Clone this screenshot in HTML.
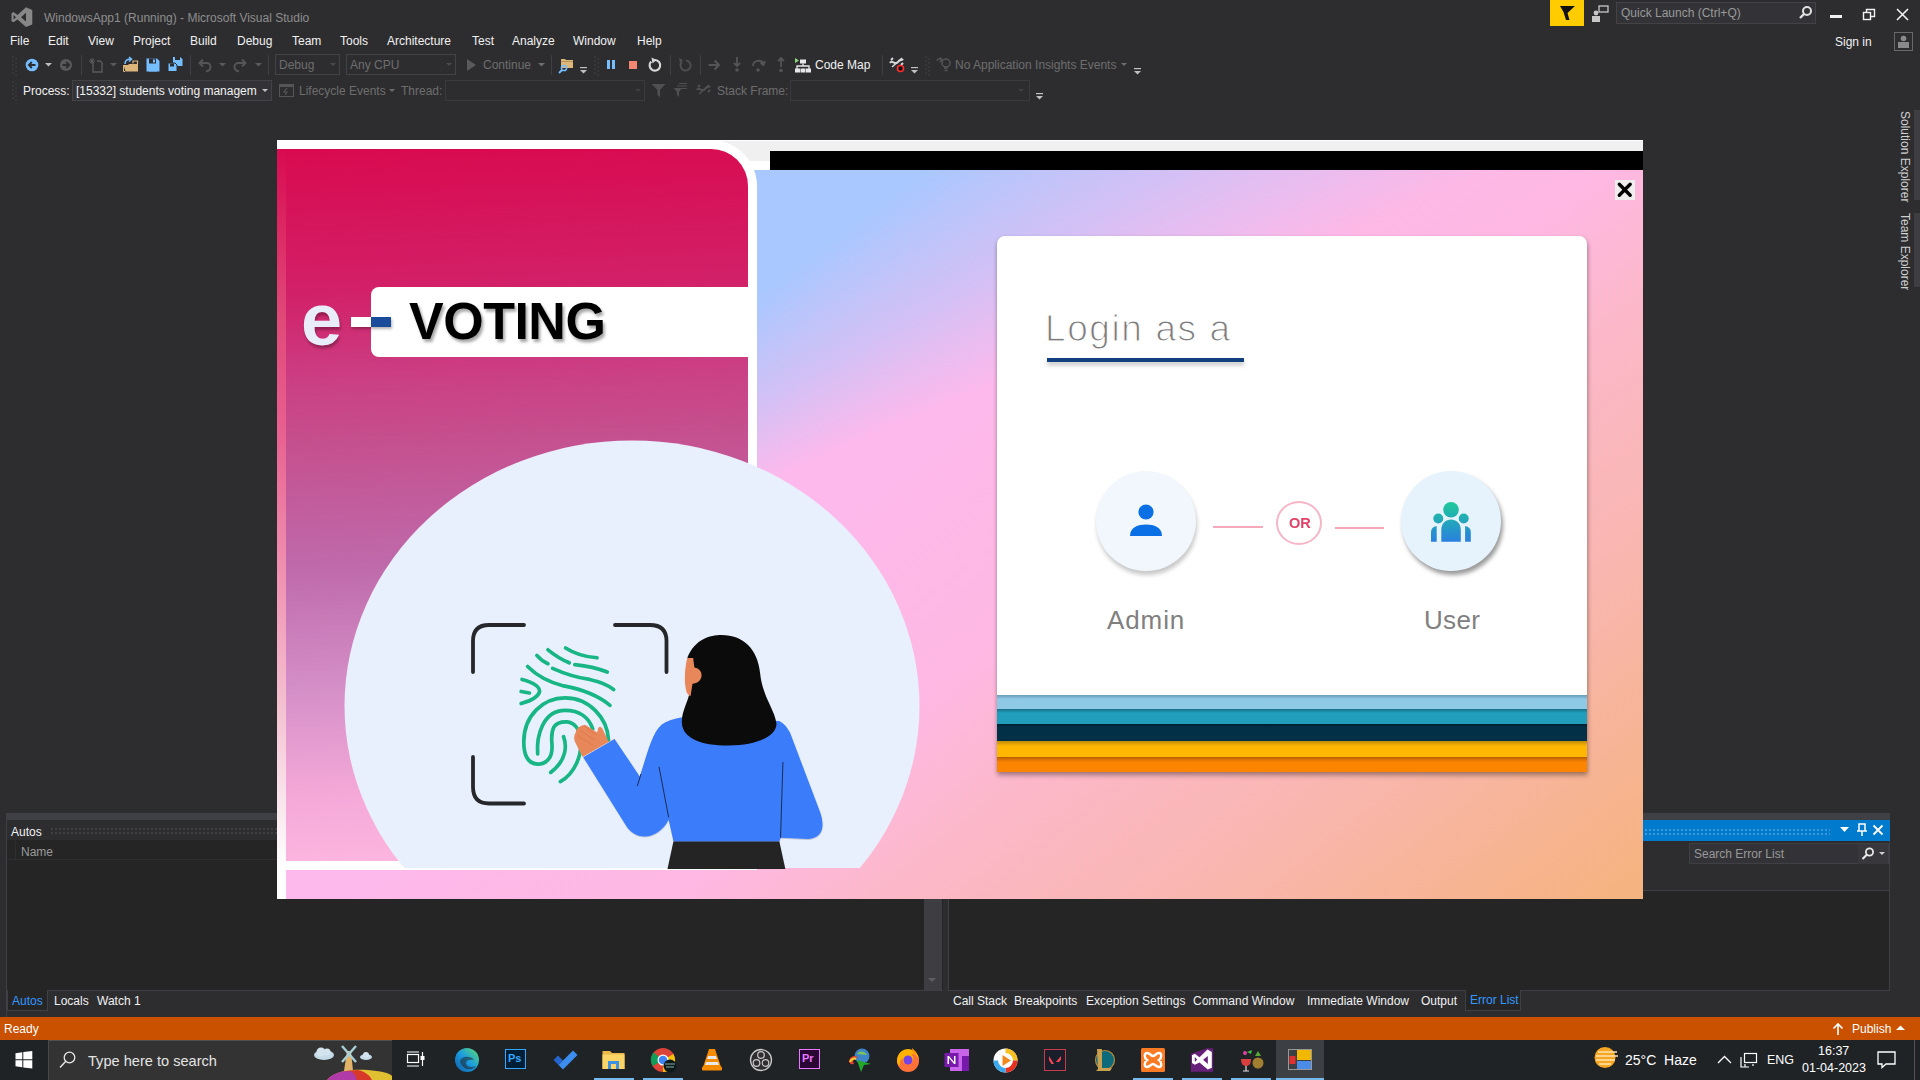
<!DOCTYPE html>
<html><head><meta charset="utf-8">
<style>
*{margin:0;padding:0;box-sizing:border-box}
html,body{width:1920px;height:1080px;overflow:hidden;background:#2d2d30;font-family:"Liberation Sans",sans-serif;}
.a{position:absolute}
.t{position:absolute;white-space:nowrap;line-height:1;font-size:12px;color:#f1f1f1}
.g{color:#6d6d6d}
svg{position:absolute;overflow:visible}
</style></head><body>
<!-- ===== VS TITLE BAR ===== -->
<svg class="a" style="left:0;top:0" width="40" height="32"><path d="M26,7.3 L32.3,10 L32.3,24.5 L26,27 L17.5,19.5 L13.5,22.3 L11.5,21.2 L11.5,13.2 L13.5,12 L17.5,15 Z M26,12.8 L21,17.2 L26,21.6 Z M13.6,15 L13.6,19.4 L16,17.2 Z" fill="#878787" fill-rule="evenodd"/></svg>
<div class="t" style="left:44px;top:12px;color:#8e8e8e">WindowsApp1 (Running) - Microsoft Visual Studio</div>

<!-- right title controls -->
<div class="a" style="left:1550px;top:0;width:34px;height:26px;background:#ffcc00"></div>
<svg style="left:1550px;top:0" width="34" height="26"><path d="M10,6 L25,6 L17.5,13 L19.5,20 L16,20 L13.5,12 Z" fill="#111"/></svg>
<svg style="left:1590px;top:4px" width="20" height="18"><rect x="9" y="2" width="9" height="6" fill="none" stroke="#c8c8c8" stroke-width="1.3"/><circle cx="6" cy="9" r="2.4" fill="#c8c8c8"/><rect x="2" y="12" width="8" height="6" fill="#c8c8c8"/></svg>
<div class="a" style="left:1616px;top:2px;width:200px;height:22px;background:#333337;border:1px solid #434346"></div>
<div class="t" style="left:1621px;top:7px;color:#999;font-size:12px">Quick Launch (Ctrl+Q)</div>
<svg style="left:1798px;top:5px" width="16" height="16"><circle cx="9" cy="6" r="4" fill="none" stroke="#e0e0e0" stroke-width="2"/><path d="M6.5,8.5 L2,13" stroke="#e0e0e0" stroke-width="2.4"/></svg>
<div class="a" style="left:1830px;top:15px;width:12px;height:3px;background:#f1f1f1"></div>
<svg style="left:1862px;top:7px" width="16" height="16"><rect x="1.5" y="5.5" width="7" height="7" fill="none" stroke="#f1f1f1" stroke-width="1.4"/><path d="M4.5,5.5 V2.5 H12.5 V9.5 H8.5" fill="none" stroke="#f1f1f1" stroke-width="1.4"/></svg>
<svg style="left:1895px;top:7px" width="16" height="16"><path d="M2,2 L13,13 M13,2 L2,13" stroke="#f1f1f1" stroke-width="1.6"/></svg>
<div class="t" style="left:1835px;top:36px;font-size:12px;color:#f1f1f1">Sign in</div>
<div class="a" style="left:1894px;top:32px;width:19px;height:19px;border:1px solid #686868"></div>
<svg style="left:1894px;top:32px" width="19" height="19"><circle cx="9.5" cy="6.5" r="2.8" fill="#8a8a8a"/><rect x="4" y="10" width="11" height="6" fill="#8a8a8a"/></svg>

<!-- ===== MENU ===== -->
<div class="t" style="left:10px;top:35px">File</div>
<div class="t" style="left:48px;top:35px">Edit</div>
<div class="t" style="left:88px;top:35px">View</div>
<div class="t" style="left:133px;top:35px">Project</div>
<div class="t" style="left:190px;top:35px">Build</div>
<div class="t" style="left:237px;top:35px">Debug</div>
<div class="t" style="left:292px;top:35px">Team</div>
<div class="t" style="left:340px;top:35px">Tools</div>
<div class="t" style="left:387px;top:35px">Architecture</div>
<div class="t" style="left:472px;top:35px">Test</div>
<div class="t" style="left:512px;top:35px">Analyze</div>
<div class="t" style="left:573px;top:35px">Window</div>
<div class="t" style="left:637px;top:35px">Help</div>

<!-- ===== TOOLBAR ROW 1 ===== -->
<svg style="left:12px;top:56px" width="6" height="20"><g fill="#464646"><circle cx="1" cy="1" r=".8"/><circle cx="4" cy="3" r=".8"/><circle cx="1" cy="5" r=".8"/><circle cx="4" cy="7" r=".8"/><circle cx="1" cy="9" r=".8"/><circle cx="4" cy="11" r=".8"/><circle cx="1" cy="13" r=".8"/><circle cx="4" cy="15" r=".8"/><circle cx="1" cy="17" r=".8"/><circle cx="4" cy="19" r=".8"/></g></svg>
<svg style="left:24px;top:57px" width="16" height="16"><circle cx="8" cy="8" r="6.3" fill="#75beff"/><path d="M11.5,8 H5 M7.8,5 L4.8,8 L7.8,11" stroke="#2d2d30" stroke-width="1.8" fill="none"/></svg>
<svg style="left:45px;top:63px" width="8" height="5"><path d="M0,0 H7 L3.5,3.5Z" fill="#bcbcbc"/></svg>
<svg style="left:58px;top:57px" width="16" height="16"><circle cx="8" cy="8" r="6.1" fill="#595959"/><path d="M4.5,8 H11 M8.2,5 L11.2,8 L8.2,11" stroke="#2d2d30" stroke-width="1.8" fill="none"/></svg>
<div class="a" style="left:81px;top:55px;width:1px;height:20px;background:#3f3f46"></div>
<svg style="left:89px;top:58px" width="15" height="15"><path d="M4,4 V14 H13 V5 L11,3 H8" fill="none" stroke="#5a5a5a" stroke-width="1.4"/><path d="M1,1 L5,5 M5,1 L1,5 M3,0 V6 M0,3 H6" stroke="#5a5a5a" stroke-width="1"/></svg>
<svg style="left:110px;top:63px" width="8" height="5"><path d="M0,0 H7 L3.5,3.5Z" fill="#5a5a5a"/></svg>
<svg style="left:123px;top:57px" width="16" height="16"><path d="M0.5,8 H5 L6,7 H15 V14.5 H2.5 Z" fill="#dcb67a"/><path d="M0.5,8 V14.5 H2" stroke="#dcb67a" fill="none"/><path d="M10,6.5 V4 H14.5 V7" stroke="#dcb67a" fill="none" stroke-width="1.2"/><path d="M2,7 C2,3 5,2 8,2 M6,0 L8.5,2 L6,4.5" stroke="#75beff" stroke-width="1.6" fill="none"/></svg>
<svg style="left:146px;top:58px" width="14" height="14"><path d="M0.5,0.5 H11 L13.5,3 V13.5 H0.5 Z" fill="#75beff"/><rect x="3" y="0.5" width="7" height="5" fill="#2d2d30"/><rect x="7" y="1.5" width="2" height="3" fill="#75beff"/><rect x="3" y="9" width="8" height="4.5" fill="#75beff"/></svg>
<svg style="left:167px;top:56px" width="16" height="16"><path d="M6,1 H13 L15.5,3 V10 H6 Z" fill="#75beff"/><rect x="8" y="1" width="5" height="3" fill="#2d2d30"/><path d="M1,7 H8 L10,9 V15.5 H1 Z" fill="#75beff" stroke="#2d2d30" stroke-width="1"/><rect x="3" y="7.5" width="4" height="3" fill="#2d2d30"/></svg>
<div class="a" style="left:190px;top:55px;width:1px;height:20px;background:#3f3f46"></div>
<svg style="left:198px;top:58px" width="14" height="14"><path d="M2,5 H9 C12,5 12.5,8 12.5,9 C12.5,12 10,13 8,13.5 M5,1.5 L1.5,5 L5,8.5" stroke="#555" stroke-width="2" fill="none"/></svg>
<svg style="left:219px;top:63px" width="8" height="5"><path d="M0,0 H7 L3.5,3.5Z" fill="#5a5a5a"/></svg>
<svg style="left:233px;top:58px" width="14" height="14"><path d="M12,5 H5 C2,5 1.5,8 1.5,9 C1.5,12 4,13 6,13.5 M9,1.5 L12.5,5 L9,8.5" stroke="#555" stroke-width="2" fill="none"/></svg>
<svg style="left:255px;top:63px" width="8" height="5"><path d="M0,0 H7 L3.5,3.5Z" fill="#5a5a5a"/></svg>
<div class="a" style="left:268px;top:55px;width:1px;height:20px;background:#3f3f46"></div>
<div class="a" style="left:275px;top:54px;width:65px;height:21px;border:1px solid #434346"></div>
<div class="t g" style="left:279px;top:59px">Debug</div>
<svg style="left:330px;top:63px" width="8" height="5"><path d="M0,0 H6 L3,3Z" fill="#4a4a4a"/></svg>
<div class="a" style="left:346px;top:54px;width:110px;height:21px;border:1px solid #434346"></div>
<div class="t g" style="left:350px;top:59px">Any CPU</div>
<svg style="left:446px;top:63px" width="8" height="5"><path d="M0,0 H6 L3,3Z" fill="#4a4a4a"/></svg>
<svg style="left:467px;top:59px" width="10" height="13"><path d="M0,0 L9,6 L0,12Z" fill="#5a5a5a"/></svg>
<div class="t g" style="left:483px;top:59px">Continue</div>
<svg style="left:538px;top:63px" width="8" height="5"><path d="M0,0 H7 L3.5,3.5Z" fill="#6d6d6d"/></svg>
<div class="a" style="left:551px;top:55px;width:1px;height:20px;background:#3f3f46"></div>
<svg style="left:558px;top:57px" width="16" height="17"><path d="M3,2 H7 L8,3 H15 V11 H3Z" fill="#dcb67a"/><rect x="3" y="4" width="12" height="1" fill="#b8955a"/><circle cx="6" cy="11" r="2.6" fill="none" stroke="#75beff" stroke-width="1.5"/><path d="M4,13 L1,16" stroke="#75beff" stroke-width="1.8"/></svg>
<svg style="left:580px;top:67px" width="8" height="8"><rect x="0" y="0" width="7" height="1.2" fill="#c0c0c0"/><path d="M0,3 H7 L3.5,6.5Z" fill="#c0c0c0"/></svg>
<svg style="left:594px;top:56px" width="6" height="20"><g fill="#464646"><circle cx="1" cy="1" r=".8"/><circle cx="4" cy="3" r=".8"/><circle cx="1" cy="5" r=".8"/><circle cx="4" cy="7" r=".8"/><circle cx="1" cy="9" r=".8"/><circle cx="4" cy="11" r=".8"/><circle cx="1" cy="13" r=".8"/><circle cx="4" cy="15" r=".8"/><circle cx="1" cy="17" r=".8"/><circle cx="4" cy="19" r=".8"/></g></svg>
<div class="a" style="left:607px;top:60px;width:3px;height:9px;background:#75beff"></div>
<div class="a" style="left:612px;top:60px;width:3px;height:9px;background:#75beff"></div>
<div class="a" style="left:629px;top:61px;width:8px;height:8px;background:#f48771"></div>
<svg style="left:647px;top:57px" width="16" height="16"><path d="M4.2,4.5 A5.3,5.3 0 1 0 8,3 " stroke="#d8d8d8" stroke-width="2.2" fill="none"/><path d="M4.5,0.5 L9.5,3 L5.5,6.5Z" fill="#d8d8d8"/></svg>
<div class="a" style="left:670px;top:55px;width:1px;height:20px;background:#3f3f46"></div>
<svg style="left:677px;top:57px" width="16" height="16"><path d="M5,5 A5,5 0 1 0 9,3.5" stroke="#4e4e4e" stroke-width="2" fill="none"/><path d="M2,1 L6,3 L3,6Z" fill="#4e4e4e"/></svg>
<div class="a" style="left:700px;top:55px;width:1px;height:20px;background:#3f3f46"></div>
<svg style="left:708px;top:59px" width="13" height="12"><path d="M0.5,6 H11 M6.5,1.5 L11,6 L6.5,10.5" stroke="#555" stroke-width="2" fill="none"/></svg>
<svg style="left:732px;top:57px" width="10" height="16"><path d="M5,0 V9 M2,6 L5,9 L8,6" stroke="#555" stroke-width="1.8" fill="none"/><circle cx="5" cy="13" r="1.8" fill="#555"/></svg>
<svg style="left:751px;top:57px" width="15" height="16"><path d="M2,9 C2,3 11,2 12.5,7 M9.5,6 L12.5,8 L14,4" stroke="#555" stroke-width="1.8" fill="none"/><circle cx="7" cy="13" r="1.8" fill="#555"/></svg>
<svg style="left:776px;top:57px" width="10" height="16"><path d="M5,10 V1 M2,4 L5,1 L8,4" stroke="#555" stroke-width="1.8" fill="none"/><circle cx="5" cy="13.5" r="1.8" fill="#555"/></svg>
<svg style="left:794px;top:57px" width="17" height="17"><path d="M1,1 L5,3.5 L1,6Z" fill="#8cd97c"/><rect x="6" y="2.5" width="6" height="4" fill="#e8e8e8"/><path d="M9,6.5 V9 M3,12 V9 H15 V12" stroke="#e8e8e8" stroke-width="1.3" fill="none"/><rect x="1" y="11.5" width="5" height="4" fill="#e8e8e8"/><rect x="6.5" y="11.5" width="5" height="4" fill="#e8e8e8"/><rect x="12" y="11.5" width="5" height="4" fill="#e8e8e8"/></svg>
<div class="t" style="left:815px;top:59px;font-size:12px">Code Map</div>
<div class="a" style="left:882px;top:55px;width:1px;height:20px;background:#3f3f46"></div>
<svg style="left:889px;top:57px" width="17" height="16"><path d="M1,6 C3,2 6,9 9,5 C11,2 13,4 14,2 M4,1 L2,3 M12,8 L14,6" stroke="#d8d8d8" stroke-width="2" fill="none"/><path d="M3,10 L13,1" stroke="#d8d8d8" stroke-width="1.5"/><circle cx="11.5" cy="11.5" r="3" fill="#111" stroke="#ff2d2d" stroke-width="1.6"/></svg>
<svg style="left:911px;top:67px" width="8" height="8"><rect x="0" y="0" width="7" height="1.2" fill="#c0c0c0"/><path d="M0,3 H7 L3.5,6.5Z" fill="#c0c0c0"/></svg>
<svg style="left:925px;top:56px" width="6" height="20"><g fill="#464646"><circle cx="1" cy="1" r=".8"/><circle cx="4" cy="3" r=".8"/><circle cx="1" cy="5" r=".8"/><circle cx="4" cy="7" r=".8"/><circle cx="1" cy="9" r=".8"/><circle cx="4" cy="11" r=".8"/><circle cx="1" cy="13" r=".8"/><circle cx="4" cy="15" r=".8"/><circle cx="1" cy="17" r=".8"/><circle cx="4" cy="19" r=".8"/></g></svg>
<svg style="left:936px;top:57px" width="16" height="16"><circle cx="10" cy="6" r="4" fill="none" stroke="#555" stroke-width="1.5"/><path d="M8,11 H12 M8.5,13.5 H11.5" stroke="#555" stroke-width="1.3"/><path d="M1,4 C1,1.5 4,1 6,3 M4,0.5 L6,3 L3.5,5" stroke="#555" stroke-width="1.3" fill="none"/></svg>
<div class="t g" style="left:955px;top:59px">No Application Insights Events</div>
<svg style="left:1121px;top:63px" width="8" height="5"><path d="M0,0 H6 L3,3Z" fill="#6d6d6d"/></svg>
<svg style="left:1134px;top:68px" width="8" height="8"><rect x="0" y="0" width="7" height="1.2" fill="#c0c0c0"/><path d="M0,3 H7 L3.5,6.5Z" fill="#c0c0c0"/></svg>

<!-- ===== TOOLBAR ROW 2 ===== -->
<svg style="left:12px;top:81px" width="6" height="20"><g fill="#464646"><circle cx="1" cy="1" r=".8"/><circle cx="4" cy="3" r=".8"/><circle cx="1" cy="5" r=".8"/><circle cx="4" cy="7" r=".8"/><circle cx="1" cy="9" r=".8"/><circle cx="4" cy="11" r=".8"/><circle cx="1" cy="13" r=".8"/><circle cx="4" cy="15" r=".8"/><circle cx="1" cy="17" r=".8"/><circle cx="4" cy="19" r=".8"/></g></svg>
<div class="t" style="left:23px;top:85px">Process:</div>
<div class="a" style="left:72px;top:80px;width:200px;height:21px;border:1px solid #434346;background:#333337"></div>
<div class="t" style="left:76px;top:85px">[15332] students voting managem</div>
<svg style="left:262px;top:89px" width="8" height="5"><path d="M0,0 H6 L3,3Z" fill="#c0c0c0"/></svg>
<svg style="left:279px;top:84px" width="16" height="14"><rect x="0.5" y="0.5" width="14" height="12" fill="none" stroke="#555" stroke-width="1"/><rect x="0.5" y="0.5" width="14" height="2.5" fill="#555"/><path d="M8,4 L5,8 H8 L6,11" stroke="#555" stroke-width="1.2" fill="none"/></svg>
<div class="t g" style="left:299px;top:85px">Lifecycle Events</div>
<svg style="left:389px;top:89px" width="8" height="5"><path d="M0,0 H6 L3,3Z" fill="#6d6d6d"/></svg>
<div class="t g" style="left:401px;top:85px">Thread:</div>
<div class="a" style="left:445px;top:80px;width:200px;height:21px;border:1px solid #3a3a3e"></div>
<svg style="left:635px;top:89px" width="8" height="5"><path d="M0,0 H6 L3,3Z" fill="#404040"/></svg>
<svg style="left:651px;top:83px" width="15" height="15"><path d="M0.5,1 H14.5 L9,7 V14.5 L6.5,12 V7Z" fill="#505050"/></svg>
<svg style="left:673px;top:83px" width="15" height="15"><path d="M0.5,5 H9 L6,9 V14 L4,12 V9Z" fill="#505050"/><path d="M4,3 H14 M6,0.5 H14 M8,5.5 H14" stroke="#505050" stroke-width="1.2"/></svg>
<svg style="left:696px;top:84px" width="15" height="12"><path d="M1,6 C3,2 6,9 9,5 C11,2 13,4 14,2 M4,1 L2,3 M12,8 L14,6" stroke="#505050" stroke-width="2" fill="none"/><path d="M3,10 L13,1" stroke="#505050" stroke-width="1.5"/></svg>
<div class="t g" style="left:717px;top:85px">Stack Frame:</div>
<div class="a" style="left:790px;top:80px;width:240px;height:21px;border:1px solid #3a3a3e"></div>
<svg style="left:1018px;top:89px" width="8" height="5"><path d="M0,0 H6 L3,3Z" fill="#404040"/></svg>
<svg style="left:1036px;top:93px" width="8" height="8"><rect x="0" y="0" width="7" height="1.2" fill="#c0c0c0"/><path d="M0,3 H7 L3.5,6.5Z" fill="#c0c0c0"/></svg>

<!-- ===== RIGHT VERTICAL TABS ===== -->
<div class="a" style="left:1914px;top:110px;width:6px;height:90px;background:#3e3e42"></div>
<div class="a" style="left:1914px;top:213px;width:6px;height:74px;background:#3e3e42"></div>
<div class="t" style="left:1897px;top:111px;transform-origin:0 0;transform:translate(14px,0) rotate(90deg);color:#d0d0d0">Solution Explorer</div>
<div class="t" style="left:1897px;top:213px;transform-origin:0 0;transform:translate(14px,0) rotate(90deg);color:#d0d0d0">Team Explorer</div>

<!-- ===== BOTTOM PANELS ===== -->
<!-- left autos panel -->
<div class="a" style="left:6px;top:813px;width:937px;height:204px;background:#252526;border-left:1px solid #3f3f46"></div>
<div class="a" style="left:6px;top:813px;width:937px;height:7px;background:#3f3f46"></div>
<div class="a" style="left:7px;top:820px;width:936px;height:20px;background:#2d2d30"></div>
<div class="a" style="left:50px;top:827px;width:893px;height:7px;background-image:radial-gradient(circle,#4a4a4e 0.6px,transparent 0.9px);background-size:4px 4px"></div>
<div class="t" style="left:11px;top:826px">Autos</div>
<div class="a" style="left:7px;top:840px;width:920px;height:20px;background:#252526;border-bottom:1px solid #2f2f33"></div>
<div class="a" style="left:15px;top:841px;width:1px;height:19px;background:#2f2f33"></div>
<div class="t" style="left:21px;top:846px;color:#999">Name</div>
<div class="a" style="left:924px;top:820px;width:18px;height:170px;background:#3e3e42"></div>
<svg style="left:928px;top:978px" width="10" height="6"><path d="M0,0 H8 L4,4Z" fill="#5e5e62"/></svg>
<div class="a" style="left:7px;top:990px;width:936px;height:27px;background:#2d2d30;border-top:1px solid #3f3f46"></div>
<div class="a" style="left:7px;top:990px;width:41px;height:21px;background:#252526;border:1px solid #3f3f46;border-top:none"></div>
<div class="t" style="left:12px;top:995px;color:#3399ff">Autos</div>
<div class="t" style="left:54px;top:995px">Locals</div>
<div class="t" style="left:97px;top:995px">Watch 1</div>

<!-- right error list panel -->
<div class="a" style="left:948px;top:813px;width:942px;height:204px;background:#2d2d30"></div>
<div class="a" style="left:948px;top:813px;width:942px;height:178px;background:#252526;border-left:1px solid #3f3f46;border-right:1px solid #3f3f46"></div>
<div class="a" style="left:948px;top:813px;width:942px;height:7px;background:#3f3f46"></div>
<div class="a" style="left:948px;top:820px;width:942px;height:21px;background:#007acc"></div>
<div class="a" style="left:1000px;top:828px;width:830px;height:7px;background-image:radial-gradient(circle,#59a8e0 0.6px,transparent 0.9px);background-size:4px 4px"></div>
<svg style="left:1840px;top:827px" width="10" height="7"><path d="M0,0 H9 L4.5,5Z" fill="#fff"/></svg>
<svg style="left:1856px;top:823px" width="12" height="14"><path d="M3,1 H9 V8 H3Z M1,8 H11 M6,8 V13" stroke="#fff" stroke-width="1.5" fill="none"/></svg>
<svg style="left:1872px;top:824px" width="12" height="12"><path d="M1.5,1.5 L10.5,10.5 M10.5,1.5 L1.5,10.5" stroke="#fff" stroke-width="1.8"/></svg>
<div class="a" style="left:949px;top:841px;width:940px;height:50px;background:#2d2d30;border-bottom:1px solid #3f3f46"></div>
<div class="a" style="left:1689px;top:843px;width:200px;height:21px;background:#333337;border:1px solid #3f3f46"></div>
<div class="t" style="left:1694px;top:848px;color:#999">Search Error List</div>
<div class="a" style="left:1858px;top:844px;width:30px;height:20px;background:#38383c"></div>
<svg style="left:1860px;top:846px" width="16" height="16"><circle cx="9.5" cy="6" r="3.6" fill="none" stroke="#e8e8e8" stroke-width="1.8"/><path d="M7,8.5 L2.5,13" stroke="#e8e8e8" stroke-width="2.2"/></svg>
<svg style="left:1879px;top:852px" width="8" height="5"><path d="M0,0 H6 L3,3Z" fill="#d0d0d0"/></svg>
<div class="a" style="left:948px;top:990px;width:942px;height:27px;background:#2d2d30;border-top:1px solid #3f3f46"></div>
<div class="t" style="left:953px;top:995px">Call Stack</div>
<div class="t" style="left:1014px;top:995px">Breakpoints</div>
<div class="t" style="left:1086px;top:995px">Exception Settings</div>
<div class="t" style="left:1193px;top:995px">Command Window</div>
<div class="t" style="left:1307px;top:995px">Immediate Window</div>
<div class="t" style="left:1421px;top:995px">Output</div>
<div class="a" style="left:1465px;top:990px;width:56px;height:21px;background:#252526;border:1px solid #3f3f46;border-top:none"></div>
<div class="t" style="left:1470px;top:994px;color:#3399ff">Error List</div>


<!-- ===== STATUS BAR ===== -->
<div class="a" style="left:0;top:1017px;width:1920px;height:23px;background:#ca5100"></div>
<div class="t" style="left:4px;top:1023px;color:#fff">Ready</div>
<svg style="left:1832px;top:1022px" width="12" height="14"><path d="M6,13 V2 M1.5,6.5 L6,2 L10.5,6.5" stroke="#fff" stroke-width="1.6" fill="none"/></svg>
<div class="t" style="left:1852px;top:1023px;color:#fff">Publish</div>
<svg style="left:1896px;top:1025px" width="10" height="6"><path d="M0,5 H9 L4.5,0.5Z" fill="#fff"/></svg>

<!-- ===== TASKBAR ===== -->
<div class="a" style="left:0;top:1040px;width:1920px;height:40px;background:#1f2326"></div>
<svg style="left:15px;top:1051px" width="18" height="18"><path d="M0.5,2.3 L7.3,1.3 V8.3 H0.5Z M8.3,1.1 L17.3,0 V8.3 H8.3Z M0.5,9.3 H7.3 V16.3 L0.5,15.3Z M8.3,9.3 H17.3 V17.6 L8.3,16.4Z" fill="#fff"/></svg>
<div class="a" style="left:48px;top:1040px;width:344px;height:40px;background:#333333;border-left:1px solid #4a4a4a;border-top:1px solid #505050"></div>
<svg style="left:59px;top:1051px" width="18" height="18"><circle cx="10.5" cy="6.5" r="5.3" fill="none" stroke="#e8e8e8" stroke-width="1.3"/><path d="M6.8,10.2 L1,16.5" stroke="#e8e8e8" stroke-width="1.4"/></svg>
<div class="t" style="left:88px;top:1054px;font-size:14.6px;color:#e4e4e4">Type here to search</div>
<!-- doodle -->
<svg style="left:310px;top:1040px" width="82" height="40">
<ellipse cx="14" cy="15" rx="10" ry="5" fill="#c6dbe8"/><circle cx="11" cy="12" r="4.5" fill="#d4e4ee"/><circle cx="17" cy="12" r="3.5" fill="#d4e4ee"/>
<ellipse cx="56" cy="17" rx="6" ry="3" fill="#c6dbe8"/><circle cx="56" cy="15" r="3" fill="#d4e4ee"/>
<path d="M34,31 L37,11 H41 L43,31Z" fill="#e3b36a"/>
<path d="M32,6 L46,22 M46,6 L32,22" stroke="#a8d0d8" stroke-width="2.4"/>
<path d="M17,40 C25,30 45,29 58,30 C70,31 80,33 82,36 V40Z" fill="#e0c030"/>
<path d="M17,40 C24,33 36,30 48,30 C56,32 60,36 62,40Z" fill="#d8382a"/>
<path d="M17,40 C22,34 30,31 40,31 C45,33 46,37 47,40Z" fill="#b03aa8"/>
</svg>
<svg style="left:406px;top:1051px" width="20" height="17"><rect x="1.5" y="3.5" width="11" height="8" fill="none" stroke="#fff" stroke-width="1.2"/><path d="M1,1 H13 M1,15 H13 M16.5,1 V15" stroke="#fff" stroke-width="1.2"/><rect x="14.5" y="5" width="4" height="4" fill="#fff"/></svg>
<!-- edge -->
<svg style="left:454px;top:1047px" width="26" height="26"><defs><linearGradient id="eg" x1="0" y1="1" x2="1" y2="0"><stop offset="0" stop-color="#0c59a4"/><stop offset=".5" stop-color="#1b9de2"/><stop offset="1" stop-color="#60dd6a"/></linearGradient></defs><circle cx="13" cy="13" r="12" fill="url(#eg)"/><path d="M6,15 C6,9 17,8 20,13 C17,12 11,13 12,17 C13,20 18,21 22,19 C19,24 9,24 6,15Z" fill="#1f2326" opacity=".55"/></svg>
<!-- ps -->
<div class="a" style="left:505px;top:1049px;width:21px;height:20px;background:#001e36;border:1.5px solid #31a8ff"></div>
<div class="t" style="left:508px;top:1053px;font-size:11px;font-weight:bold;color:#31a8ff">Ps</div>
<!-- todo -->
<svg style="left:552px;top:1049px" width="26" height="22"><path d="M1.5,11 L6,6.5 L11,11.5 L6.5,16Z" fill="#2564cf"/><path d="M6.5,16 L21,1.5 L25.5,6 L11,20.5Z" fill="#3c8df0"/></svg>
<!-- explorer -->
<svg style="left:602px;top:1050px" width="23" height="20"><path d="M0.5,1 H8 L10,3 H22.5 V19 H0.5Z" fill="#e8b84a"/><rect x="0.5" y="4.5" width="22" height="14.5" fill="#fad466"/><path d="M6,11 H17 V19 H14 V14 H9 V19 H6Z" fill="#3c92e0"/></svg>
<div class="a" style="left:594px;top:1078px;width:40px;height:2px;background:#76b9ed"></div>
<!-- chrome -->
<svg style="left:650px;top:1047px" width="28" height="27"><circle cx="13" cy="13" r="12" fill="#db4437"/><path d="M13,13 L2.6,19 A12,12 0 0 1 3.6,5.5 Z" fill="#0f9d58"/><path d="M13,13 L23.4,7 A12,12 0 0 1 13,25Z" fill="#f4c20d"/><circle cx="13" cy="13" r="5.5" fill="#fff"/><circle cx="13" cy="13" r="4.3" fill="#4285f4"/><circle cx="20" cy="19" r="6.5" fill="#0d1a1a"/><path d="M15,17 H25 M16,20 H24" stroke="#8aa" stroke-width="1"/></svg>
<div class="a" style="left:643px;top:1078px;width:40px;height:2px;background:#76b9ed"></div>
<!-- vlc -->
<svg style="left:701px;top:1048px" width="22" height="23"><path d="M8,1 H14 L20,19 H2Z" fill="#f48b00"/><path d="M7,8 H15 L16,11 H6Z M5,14 H17 L18,17 H4Z" fill="#e8e8e8"/><rect x="1" y="18.5" width="20" height="4" rx="1" fill="#f48b00"/></svg>
<!-- obs -->
<svg style="left:749px;top:1048px" width="24" height="24"><circle cx="12" cy="12" r="10.5" fill="#302e31" stroke="#c9c9c9" stroke-width="1.3"/><circle cx="12" cy="7" r="3.3" fill="none" stroke="#c9c9c9" stroke-width="1.2"/><circle cx="7.5" cy="15" r="3.3" fill="none" stroke="#c9c9c9" stroke-width="1.2"/><circle cx="16.5" cy="15" r="3.3" fill="none" stroke="#c9c9c9" stroke-width="1.2"/></svg>
<!-- pr -->
<div class="a" style="left:799px;top:1049px;width:21px;height:20px;background:#2a0634;border:1.5px solid #ea77ff"></div>
<div class="t" style="left:802px;top:1053px;font-size:11px;font-weight:bold;color:#ea77ff">Pr</div>
<!-- idm -->
<svg style="left:846px;top:1047px" width="26" height="26"><circle cx="16" cy="9" r="7.5" fill="#3e86c8"/><path d="M11,7 C13,3 19,4 21,8" fill="#7cc45a"/><path d="M3,14 C4,9 9,8 12,10 C8,11 6,14 8,17 C5,18 3,16 3,14Z" fill="#e8442a"/><path d="M4,15 C5,12 8,11 10,12" stroke="#f8d030" stroke-width="2" fill="none"/><path d="M11,13 L25,17 L18,18 L15,25Z" fill="#22a82a"/></svg>
<!-- firefox -->
<svg style="left:895px;top:1047px" width="26" height="26"><circle cx="13" cy="14" r="11" fill="#ff7139"/><path d="M2,14 C2,6 8,2 13,2 C18,2 24,6 24,13 C22,8 19,6 16,7 C20,10 19,16 13,17 C9,17 7,14 8,11 C5,13 4,16 6,19 C3,18 2,16 2,14Z" fill="#ffb300"/><circle cx="13" cy="13" r="4.5" fill="#7542e5"/><path d="M17,1 C19,3 21,4 22,7 L18,6Z" fill="#ff9500"/></svg>
<!-- onenote -->
<svg style="left:944px;top:1048px" width="26" height="24"><rect x="6" y="1" width="19" height="22" fill="#ca64ea"/><rect x="18" y="8" width="7" height="15" fill="#7719aa"/><rect x="0.5" y="5" width="14" height="14" fill="#7719aa"/><path d="M3.5,16 V8 H5 L10,14 V8 H11.5 V16 H10 L5,10 V16Z" fill="#fff"/></svg>
<!-- media player -->
<svg style="left:992px;top:1047px" width="27" height="27"><circle cx="13.5" cy="13.5" r="12" fill="#fff"/><path d="M13.5,1.5 A12,12 0 0 1 25.5,13.5 L21,13.5 A7.5,7.5 0 0 0 13.5,6Z" fill="#f8c020"/><path d="M25.5,13.5 A12,12 0 0 1 13.5,25.5 L13.5,21 A7.5,7.5 0 0 0 21,13.5Z" fill="#e83020"/><path d="M13.5,25.5 A12,12 0 0 1 1.5,13.5 L6,13.5 A7.5,7.5 0 0 0 13.5,21Z" fill="#38a8f0"/><path d="M10.5,8 L19,13.5 L10.5,19Z" fill="#f08a20"/></svg>
<!-- valorant -->
<div class="a" style="left:1044px;top:1049px;width:22px;height:22px;background:#1a1e2a;border:1.5px solid #c63c4c"></div>
<svg style="left:1048px;top:1055px" width="14" height="10"><path d="M1,1 L6,9 H3.5 L1,5Z M13,1 L8,7 H11 L13,4.5Z" fill="#ff4655"/></svg>
<!-- lol -->
<svg style="left:1093px;top:1048px" width="22" height="24"><circle cx="12" cy="12" r="9.5" fill="#0d6a7a" stroke="#b48a3c" stroke-width="1.2"/><path d="M4,1 H9 V20 H19 L17,23 H3 L5,21Z" fill="#c8a050"/></svg>
<!-- xampp -->
<svg style="left:1141px;top:1048px" width="24" height="24"><rect x="0" y="0" width="24" height="24" rx="1.5" fill="#fb7a24"/><path d="M6,5 C9,5 10,8 12,8 C14,8 15,5 18,5 C21,5 21,10 18,12 C21,14 21,19 18,19 C15,19 14,16 12,16 C10,16 9,19 6,19 C3,19 3,14 6,12 C3,10 3,5 6,5Z" fill="none" stroke="#fff" stroke-width="2.4"/></svg>
<div class="a" style="left:1133px;top:1078px;width:40px;height:2px;background:#76b9ed"></div>
<!-- vs -->
<svg style="left:1190px;top:1047px" width="24" height="26"><path d="M0.9,6.8 L17.2,1.15 H23.1 V24.85 H0.9Z" fill="#68217a"/><path d="M2,8.3 L4.8,6.8 L9.5,10.3 L17.5,2.6 L21.8,5 V20.7 L17.8,22.5 L9.5,15.4 L4.8,17.7 L2,16Z M13.1,12.7 L17.8,8.9 V16.9Z M4.8,10 V15.1 L7.1,12.6Z" fill="#fff" fill-rule="evenodd"/></svg>
<div class="a" style="left:1182px;top:1078px;width:40px;height:2px;background:#76b9ed"></div>
<!-- tropical -->
<svg style="left:1239px;top:1047px" width="25" height="26"><circle cx="19" cy="16" r="5.5" fill="#a08030"/><path d="M16,9 L19,4 L22,9" fill="#58a838"/><path d="M2,12 H12 C12,17 10,19 7,19 C4,19 2,17 2,12Z" fill="#d84040"/><path d="M7,19 V24 M4,24 H10" stroke="#ddd" stroke-width="1.2"/><circle cx="6" cy="6" r="2" fill="#e040a0"/><path d="M8,5 L13,3 L12,7Z" fill="#40c040"/></svg>
<div class="a" style="left:1231px;top:1078px;width:40px;height:2px;background:#76b9ed"></div>
<!-- active -->
<div class="a" style="left:1276px;top:1040px;width:48px;height:40px;background:#3c4044"></div>
<div class="a" style="left:1276px;top:1078px;width:48px;height:2px;background:#76b9ed"></div>
<svg style="left:1288px;top:1049px" width="24" height="22"><rect x="0.5" y="0.5" width="23" height="20" fill="none" stroke="#999" stroke-width="1"/><rect x="9" y="1" width="14" height="10" fill="#f2b800"/><rect x="9" y="12" width="14" height="8" fill="#4a8ce8"/><rect x="1.5" y="7" width="6" height="8" fill="#e03030"/></svg>
<!-- tray -->
<svg style="left:1593px;top:1046px" width="26" height="23"><circle cx="12" cy="11.5" r="10.5" fill="#f5a623"/><path d="M5,6 H24 M3,10 H25 M3,14 H22 M6,18 H18" stroke="#ffe3b0" stroke-width="1.3"/></svg>
<div class="t" style="left:1625px;top:1053px;font-size:14px;color:#fff">25°C&nbsp; Haze</div>
<svg style="left:1717px;top:1055px" width="15" height="10"><path d="M1,8 L7.5,1.5 L14,8" stroke="#fff" stroke-width="1.3" fill="none"/></svg>
<svg style="left:1740px;top:1052px" width="18" height="17"><rect x="4.5" y="1.5" width="12" height="9" fill="none" stroke="#fff" stroke-width="1.2"/><path d="M1,5 V15 H9 M5,15 V12 M13,12 V14" stroke="#fff" stroke-width="1.2" fill="none"/></svg>
<div class="t" style="left:1767px;top:1054px;font-size:12.5px;color:#fff">ENG</div>
<div class="t" style="left:1818px;top:1045px;font-size:12.5px;color:#fff">16:37</div>
<div class="t" style="left:1802px;top:1062px;font-size:12.5px;color:#fff">01-04-2023</div>
<svg style="left:1877px;top:1051px" width="20" height="18"><path d="M1,1 H18 V13 H9 L5,16.5 V13 H1Z" fill="none" stroke="#fff" stroke-width="1.3"/></svg>
<div class="a" style="left:1914px;top:1040px;width:1px;height:40px;background:#555"></div>


<!-- ===== APP WINDOW ===== -->
<div class="a" style="left:277px;top:140px;width:1366px;height:759px;background:#f0f0f0;overflow:hidden">
  <div class="a" style="left:0;top:0;width:1366px;height:1px;background:#fff"></div>
  <!-- right gradient panel -->
  <div class="a" style="left:9px;top:30px;width:1357px;height:729px;background:conic-gradient(from 0deg at -106px 560px, rgba(168,200,255,1) 0deg, rgba(168,200,255,1) 53deg, rgba(168,200,255,.5) 60.5deg, rgba(168,200,255,0) 67deg, rgba(168,200,255,0) 360deg),linear-gradient(142deg,#fdb9ec 0%,#fdb9ec 42%,#feb8e2 58%,#fcb8c8 67%,#f9b6b0 80%,#f6b382 98%)"></div>
  <!-- white band behind -->
  <div class="a" style="left:472px;top:21px;width:21px;height:9px;background:#fff"></div>
  <!-- black bar -->
  <div class="a" style="left:493px;top:11px;width:873px;height:19px;background:#000"></div>
  <!-- login card -->
  <div class="a" style="left:720px;top:96px;width:590px;height:536px;border-radius:8px 8px 0 0;box-shadow:0 2px 4px rgba(0,0,0,.25), 1px 4px 5px rgba(0,0,0,.18);overflow:hidden;background:#fff">
    <div class="a" style="left:0;top:459px;width:590px;height:14px;background:linear-gradient(180deg,#6a9ab2 0,#8ec9e6 4px,#8ec9e6 100%)"></div>
    <div class="a" style="left:0;top:473px;width:590px;height:15px;background:linear-gradient(180deg,#1a7087 0,#219ebc 4px,#219ebc 100%)"></div>
    <div class="a" style="left:0;top:488px;width:590px;height:17px;background:linear-gradient(180deg,#011d2c 0,#023047 3px,#023047 100%)"></div>
    <div class="a" style="left:0;top:505px;width:590px;height:16px;background:linear-gradient(180deg,#c08a05 0,#ffb703 5px,#ffb703 100%)"></div>
    <div class="a" style="left:0;top:521px;width:590px;height:15px;background:linear-gradient(180deg,#b85c00 0,#fb8500 5px,#fb8500 100%)"></div>
  </div>
  <div class="a" style="left:768px;top:170px;font-family:'Liberation Sans',sans-serif;font-size:37px;line-height:1;color:#7c7c7c;white-space:nowrap;letter-spacing:1.6px;font-weight:normal;-webkit-text-stroke:1.1px #fff">Login as a</div>
  <div class="a" style="left:770px;top:218px;width:197px;height:4px;background:#12407f;box-shadow:0 3px 4px rgba(0,0,0,.25)"></div>
  <!-- admin -->
  <div class="a" style="left:819px;top:331px;width:100px;height:100px;border-radius:50%;background:#f1f7fc;box-shadow:1px 4px 4px rgba(0,0,0,.22)"></div>
  <svg style="left:819px;top:331px" width="100" height="100"><circle cx="50" cy="41" r="7.6" fill="#0b6fe6"/><path d="M34,65 C34,56 42,53.5 50,53.5 C58,53.5 66,56 66,65Z" fill="#0b6fe6"/></svg>
  <div class="a" style="left:936px;top:386px;width:50px;height:2px;background:#f6a9bb"></div>
  <div class="a" style="left:999px;top:361px;width:46px;height:44px;border-radius:50%;border:2px solid #f6b6c6;background:#fff"></div>
  <div class="a" style="left:1012px;top:375px;font-family:'Liberation Sans',sans-serif;font-weight:bold;font-size:15px;line-height:1;color:#df4468;white-space:nowrap;transform:scaleX(.97);transform-origin:0 0">OR</div>
  <div class="a" style="left:1058px;top:387px;width:49px;height:2px;background:#f6a9bb"></div>
  <!-- user -->
  <div class="a" style="left:1124px;top:331px;width:100px;height:100px;border-radius:50%;background:#e7f3fc;box-shadow:2px 4px 4px rgba(0,0,0,.4)"></div>
  <svg style="left:1124px;top:331px" width="100" height="100"><defs><linearGradient id="ug" gradientUnits="userSpaceOnUse" x1="0" y1="503" x2="0" y2="542"><stop offset="0" stop-color="#1ec89a"/><stop offset="1" stop-color="#2a7fe0"/></linearGradient></defs>
  <g fill="url(#ug)" transform="translate(-1401,-471)" ><circle cx="1451" cy="509.7" r="7.8"/><circle cx="1438.3" cy="518.5" r="5"/><circle cx="1463.7" cy="518.5" r="5"/>
  <path d="M1441.3,541.7 V530 C1441.3,523 1446,519.5 1451,519.5 C1456,519.5 1460.8,523 1460.8,530 V541.7Z"/>
  <path d="M1431,541.7 V532 C1431,528.5 1433,526.5 1436.7,526 V541.7Z"/>
  <path d="M1470.8,541.7 V532 C1470.8,528.5 1468.8,526.5 1465.1,526 V541.7Z"/></g></svg>
  <div class="a" style="left:830px;top:467px;font-family:'Liberation Sans',sans-serif;font-size:26px;line-height:1;color:#808080;white-space:nowrap;letter-spacing:0.9px">Admin</div>
  <div class="a" style="left:1147px;top:467px;font-family:'Liberation Sans',sans-serif;font-size:26px;line-height:1;color:#808080;white-space:nowrap;letter-spacing:0.3px">User</div>
  <!-- close -->
  <div class="a" style="left:1338px;top:40px;width:20px;height:20px;background:#eeeeee"></div>
  <svg style="left:1338px;top:40px" width="20" height="20"><path d="M4.3,4.3 L15.2,15.2 M15.2,4.3 L4.3,15.2" stroke="#000" stroke-width="3.4" stroke-linecap="round"/></svg>
  <!-- left image: white outer -->
  <div class="a" style="left:0;top:0;width:480px;height:730px;background:#fff;border-top-right-radius:46px"></div>
  <div class="a" style="left:9px;top:9px;width:462px;height:712px;border-top-right-radius:37px;background:linear-gradient(178deg,#d90a4f 0%,#d22068 19.8%,#cb4085 32.4%,#c5508f 40.9%,#bf6aab 57.7%,#d590c8 74.6%,#f4a8d8 88.6%,#feb8e0 100%);overflow:hidden"></div>
  <div class="a" style="left:0;top:9px;width:9px;height:750px;background:linear-gradient(180deg,#d80a50 0%,#e04878 22%,#e85f8f 37%,#f090b0 56%,#f4c0d0 74%,#fae8ee 88%,#fff 96%,#fff 100%)"></div>
  <!-- e-VOTING logo -->
  <div class="a" style="left:94px;top:147px;width:385px;height:70px;background:#fff;border-radius:8px 0 0 8px"></div>
  <div class="a" style="left:132px;top:155px;font-family:'Liberation Sans',sans-serif;font-weight:bold;font-size:52px;line-height:1;color:#000;text-shadow:2px 3px 3px rgba(0,0,0,.35);white-space:nowrap;letter-spacing:-0.5px">VOTING</div>
  <div class="a" style="left:24px;top:143px;font-family:'Liberation Sans',sans-serif;font-weight:bold;font-size:74px;line-height:1;color:#e8edf9;text-shadow:1px 3px 3px rgba(0,0,0,.3);white-space:nowrap">e</div>
  <div class="a" style="left:74px;top:177px;width:20px;height:10px;background:#fff;box-shadow:1px 2px 3px rgba(0,0,0,.3)"></div>
  <div class="a" style="left:94px;top:177px;width:20px;height:10px;background:#1b4b9b;box-shadow:1px 2px 3px rgba(0,0,0,.3)"></div>
  <!-- illustration (absolute page coords via svg at page origin) -->
  <svg style="left:-277px;top:-140px" width="1920" height="1080">
    <defs><clipPath id="cl"><rect x="0" y="0" width="1920" height="868"/></clipPath>
    <filter id="sh" x="-20%" y="-20%" width="140%" height="140%"><feDropShadow dx="1" dy="3" stdDeviation="2" flood-color="#000" flood-opacity=".25"/></filter></defs>
    <ellipse cx="632" cy="706" rx="287.5" ry="265.5" fill="#e9f0fd" clip-path="url(#cl)"/>
    <!-- brackets -->
    <g stroke="#26272b" stroke-width="3.8" fill="none" stroke-linecap="round">
      <path d="M473,672 V641 Q473,625 489,625 H524"/>
      <path d="M615,625 H650 Q666.5,625 666.5,641 V672"/>
      <path d="M473,757 V787 Q473,803.5 489,803.5 H524"/>
    </g>
    <!-- fingerprint -->
    <g transform="translate(460,610) scale(0.185185)" stroke="#17b684" stroke-width="20" fill="none" stroke-linecap="round">
      <path d="M570,205 Q640,250 740,258"/>
      <path d="M475,215 Q530,260 590,285"/>
      <path d="M620,295 Q720,305 795,335"/>
      <path d="M415,245 Q440,275 475,290"/>
      <path d="M500,315 Q600,360 700,375 Q790,395 830,430"/>
      <path d="M365,305 Q440,380 560,410 Q720,440 810,515"/>
      <path d="M335,375 Q430,400 430,440 Q420,480 330,505"/>
      <path d="M330,440 L375,448"/>
    </g>
    <g transform="translate(515,690) scale(0.09259)" stroke="#17b684" stroke-width="40" fill="none" stroke-linecap="round">
      <path d="M1010,540 C1000,300 800,85 540,85 C300,85 95,280 95,560 C95,720 150,800 250,800 C350,800 400,720 400,620 C400,540 380,480 420,400 C460,340 520,345 560,345 C640,350 700,420 710,560 C720,700 650,900 490,990"/>
      <path d="M245,690 C230,500 300,220 540,220 C700,220 800,300 840,420"/>
      <path d="M525,505 C560,600 560,760 385,890"/>
    </g>
    <!-- woman -->
    <g transform="translate(570,620) scale(0.24062)">
      <path d="M430,920 L870,920 L895,1035 L405,1035Z" fill="#242424"/>
      <g filter="url(#sh)">
      <path d="M55,570 L185,495 L290,650 C320,560 340,470 380,435 C400,420 430,410 460,405 L870,420 C890,430 905,450 915,470 L1040,800 C1060,860 1050,905 990,910 L875,905 L870,920 L430,920 L410,830 C390,870 350,900 310,900 C270,900 245,875 230,850 Z" fill="#3a7cfb"/>
      </g>
      <path d="M370,610 L410,820 M885,590 L875,905 M280,690 L295,640" stroke="#1b2a4a" stroke-width="4" fill="none"/>
            <path d="M488,155 C520,80 580,62 630,62 C720,62 780,120 790,220 C800,320 850,370 858,430 C860,480 780,522 660,522 C540,522 470,490 465,430 C462,380 492,340 500,290 C505,250 505,200 488,155Z" fill="#0b0b0b"/>
      <path d="M488,158 L512,158 C514,175 516,190 517,197 C540,200 552,222 545,240 C540,255 530,262 509,265 L501,317 C492,312 486,305 484,298 C476,270 476,230 480,200 C482,180 485,165 488,158 Z" fill="#e8875a"/>
      <path d="M52,569 L20,505 C15,490 18,478 22,472 C26,455 32,448 36,447 C45,437 58,434 66,437 L92,454 L113,468 L117,450 C120,443 130,443 135,452 L160,505 L189,490 Z" fill="#e8875a"/>
      <path d="M30,480 L95,520 M40,458 L105,500 M62,442 L112,480" stroke="#d2703f" stroke-width="4" fill="none" opacity=".6"/>
    </g>
  </svg>
</div>

</body></html>
